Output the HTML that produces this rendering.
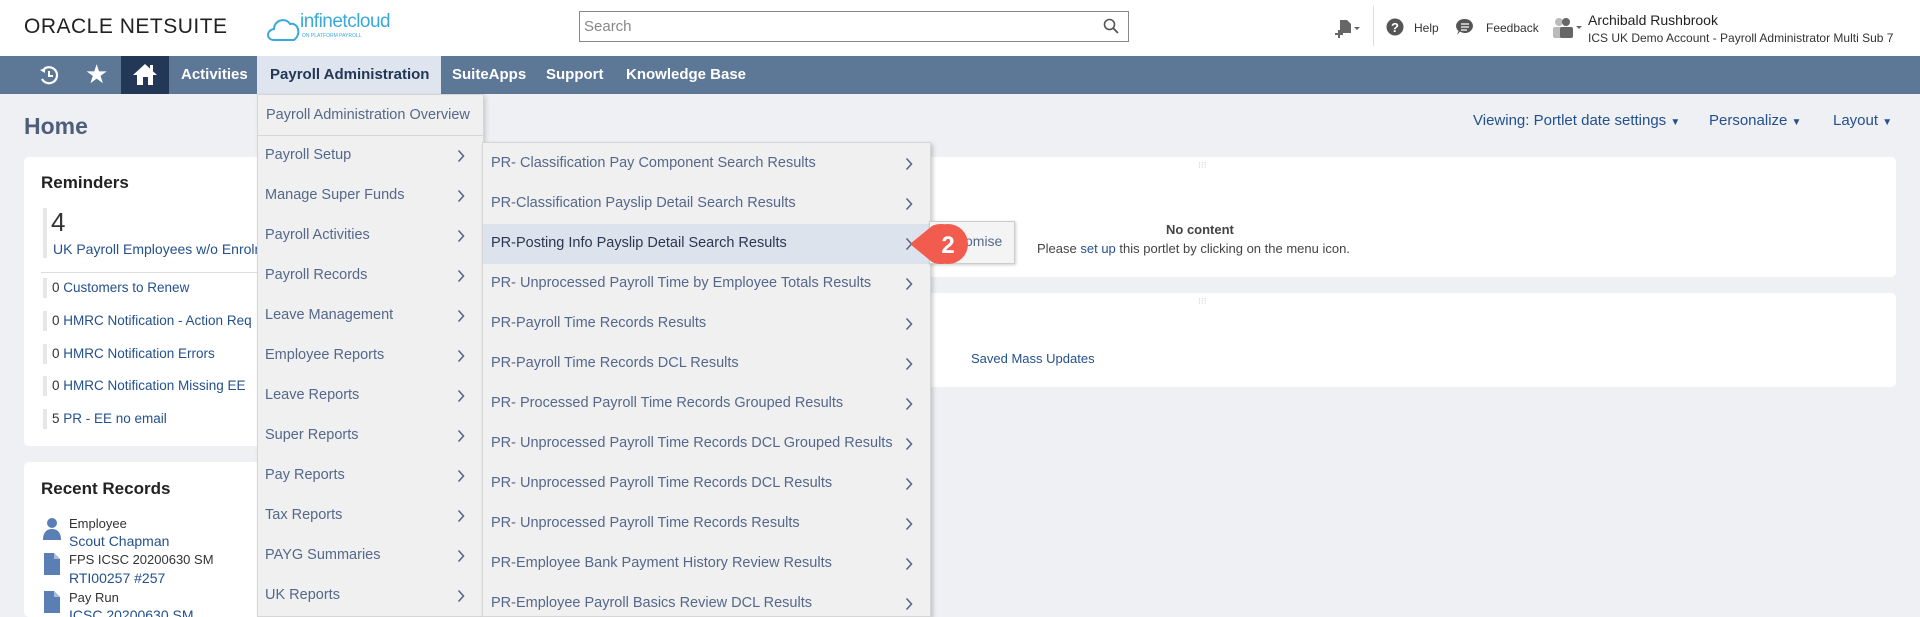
<!DOCTYPE html>
<html><head><meta charset="utf-8"><style>
*{margin:0;padding:0;box-sizing:border-box}
html{width:1920px;height:617px;overflow:hidden}
body{width:1920px;height:617px;overflow:hidden;background:#eef0f4;font-family:"Liberation Sans",sans-serif;position:relative}
.a{position:absolute;white-space:nowrap}
.hdr{left:0;top:0;width:1920px;height:56px;background:#fff}
.nav{left:0;top:56px;width:1920px;height:38px;background:#5d7797}
.nv{top:56px;height:38px;line-height:38px;color:#fff;font-weight:bold;font-size:15px}
.card{background:#fff;border-radius:5px}
.m1{left:257px;top:94px;width:227px;height:523px;background:#f0f0f0;border:1px solid #d6d6d6;box-shadow:2px 2px 4px rgba(0,0,0,.15)}
.m2{left:482px;top:142px;width:449px;height:475px;background:#f0f0f0;border:1px solid #d6d6d6;box-shadow:2px 2px 4px rgba(0,0,0,.2)}
.it{position:absolute;left:8px;font-size:14.5px;color:#55688a}
.ar{position:absolute;width:8px;height:14px}
.lk{color:#24508c}
.rem{font-size:13.5px;color:#333}
.bar{position:absolute;left:43px;width:4px;background:#e6e6e6}
</style></head><body>
<svg width="0" height="0" style="position:absolute"><defs><symbol id="ch" viewBox="0 0 8 14"><path d="M1.5 1.5 L6.5 7 L1.5 12.5" fill="none" stroke="#55688a" stroke-width="1.6"/></symbol></defs></svg>
<div class="a hdr"></div>
<div class="a" style="left:24px;top:15px;font-size:21px;color:#222;letter-spacing:.5px">ORACLE NETSUITE</div>
<svg class="a" style="left:266px;top:14px" width="36" height="30"><path d="M8 26 C0 26 0 16 8 15 C8 6 20 3 24 10 C32 8 36 20 28 26 Z" fill="none" stroke="#3aa9d9" stroke-width="2"/></svg>
<div class="a" style="left:300px;top:11px;font-size:19px;color:#3aa9d9;letter-spacing:-.5px">infinetcloud</div>
<div class="a" style="left:302px;top:33px;font-size:5px;color:#3aa9d9">ON PLATFORM PAYROLL</div>
<div class="a" style="left:579px;top:11px;width:550px;height:31px;border:1px solid #888;background:#fff;font-size:15px;color:#888;padding:6px 4px">Search</div>
<svg class="a" style="left:1103px;top:18px" width="16" height="16"><circle cx="6.5" cy="6.5" r="5" stroke="#555" stroke-width="1.6" fill="none"/><path d="M10 10 L15 15" stroke="#555" stroke-width="1.8"/></svg>
<svg class="a" style="left:1334px;top:18px" width="28" height="22"><path d="M6 2h7l4 4v9H6z" fill="#666"/><path d="M1 16h8M5 12v8" stroke="#666" stroke-width="2"/><path d="M20 9h6l-3 3z" fill="#666"/></svg>
<div class="a" style="left:1373px;top:6px;width:1px;height:40px;background:#ddd"></div>
<svg class="a" style="left:1386px;top:18px" width="18" height="18"><circle cx="9" cy="9" r="8.5" fill="#555"/><text x="9" y="14" font-size="13" font-weight="bold" fill="#fff" text-anchor="middle" font-family="Liberation Sans">?</text></svg>
<div class="a" style="left:1414px;top:21px;font-size:12px;color:#333">Help</div>
<svg class="a" style="left:1456px;top:18px" width="18" height="18"><path d="M9 1a8 7 0 1 1-5 12.5L1 17l1.5-4A8 7 0 0 1 9 1z" fill="#555"/><path d="M5 6h8M5 9h8M5 12h6" stroke="#fff" stroke-width="1.3"/></svg>
<div class="a" style="left:1486px;top:21px;font-size:12px;color:#333">Feedback</div>
<svg class="a" style="left:1551px;top:17px" width="34" height="22"><circle cx="8" cy="5" r="4" fill="#bbb"/><rect x="2" y="10" width="12" height="11" rx="2" fill="#bbb"/><circle cx="15" cy="5" r="4" fill="#666"/><rect x="9" y="10" width="13" height="11" rx="2" fill="#666"/><path d="M25 9h6l-3 3z" fill="#666"/></svg>
<div class="a" style="left:1588px;top:12px;font-size:14px;color:#222">Archibald Rushbrook</div>
<div class="a" style="left:1588px;top:31px;font-size:12px;color:#333">ICS UK Demo Account - Payroll Administrator Multi Sub 7</div>

<div class="a nav"></div>
<svg class="a" style="left:38px;top:64px" width="22" height="22"><path d="M6 5 A8 8 0 1 1 4 15" fill="none" stroke="#fff" stroke-width="2.2"/><path d="M2 6l5-2 0 5z" fill="#fff"/><path d="M11 7v5h4" stroke="#fff" stroke-width="2" fill="none"/></svg>
<div class="a" style="left:85px;top:59px;font-size:26px;color:#fff">★</div>
<div class="a" style="left:121px;top:56px;width:48px;height:38px;background:#233756"></div>
<svg class="a" style="left:132px;top:62px" width="26" height="24"><path d="M13 2L1 13h4v10h16V13h4z" fill="#fff"/><rect x="11" y="15" width="5" height="8" fill="#233756"/><rect x="18" y="3" width="3" height="6" fill="#fff"/></svg>
<div class="a nv" style="left:181px">Activities</div>
<div class="a" style="left:257px;top:56px;width:184px;height:38px;background:#dfe5ee"></div>
<div class="a nv" style="left:270px;color:#233756">Payroll Administration</div>
<div class="a nv" style="left:452px">SuiteApps</div>
<div class="a nv" style="left:546px">Support</div>
<div class="a nv" style="left:626px">Knowledge Base</div>

<div class="a" style="left:24px;top:113px;font-size:23px;font-weight:bold;color:#4d5f7a">Home</div>
<div class="a" style="left:1473px;top:112px;font-size:15px;color:#24508c">Viewing: Portlet date settings <span style="font-size:10px">▼</span></div>
<div class="a" style="left:1709px;top:112px;font-size:15px;color:#24508c">Personalize <span style="font-size:10px">▼</span></div>
<div class="a" style="left:1833px;top:112px;font-size:15px;color:#24508c">Layout <span style="font-size:10px">▼</span></div>

<div class="a card" style="left:24px;top:157px;width:260px;height:289px"></div>
<div class="a" style="left:41px;top:173px;font-size:17px;font-weight:bold;color:#222">Reminders</div>
<div class="bar" style="top:208px;height:50px"></div>
<div class="a" style="left:51px;top:207px;font-size:26px;color:#333">4</div>
<div class="a lk" style="left:53px;top:241px;font-size:14px">UK Payroll Employees w/o Enrolm</div>
<div class="a" style="left:41px;top:272px;width:220px;height:1px;background:#ddd"></div>
<div class="bar" style="top:278px;height:20px"></div><div class="a rem" style="left:52px;top:280px">0 <span class="lk">Customers to Renew</span></div>
<div class="bar" style="top:311px;height:20px"></div><div class="a rem" style="left:52px;top:313px">0 <span class="lk">HMRC Notification - Action Req</span></div>
<div class="bar" style="top:344px;height:20px"></div><div class="a rem" style="left:52px;top:346px">0 <span class="lk">HMRC Notification Errors</span></div>
<div class="bar" style="top:376px;height:20px"></div><div class="a rem" style="left:52px;top:378px">0 <span class="lk">HMRC Notification Missing EE</span></div>
<div class="bar" style="top:409px;height:20px"></div><div class="a rem" style="left:52px;top:411px">5 <span class="lk">PR - EE no email</span></div>

<div class="a card" style="left:24px;top:462px;width:260px;height:155px"></div>
<div class="a" style="left:41px;top:479px;font-size:17px;font-weight:bold;color:#222">Recent Records</div>
<svg class="a" style="left:42px;top:517px" width="20" height="24"><circle cx="10" cy="6" r="5" fill="#5a7fb5"/><path d="M1 23c0-8 4-11 9-11s9 3 9 11z" fill="#5a7fb5"/></svg>
<div class="a" style="left:69px;top:516px;font-size:13px;color:#333">Employee</div>
<div class="a lk" style="left:69px;top:533px;font-size:14px">Scout Chapman</div>
<svg class="a" style="left:44px;top:553px" width="16" height="22"><path d="M0 0h10l6 6v16H0z" fill="#5a7fb5"/><path d="M10 0v6h6" fill="#a8bddb"/></svg>
<div class="a" style="left:69px;top:552px;font-size:13px;color:#333">FPS ICSC 20200630 SM</div>
<div class="a lk" style="left:69px;top:570px;font-size:14px">RTI00257 #257</div>
<svg class="a" style="left:44px;top:591px" width="16" height="22"><path d="M0 0h10l6 6v16H0z" fill="#5a7fb5"/><path d="M10 0v6h6" fill="#a8bddb"/></svg>
<div class="a" style="left:69px;top:590px;font-size:13px;color:#333">Pay Run</div>
<div class="a lk" style="left:69px;top:607px;font-size:14px">ICSC 20200630 SM</div>

<div class="a card" style="left:920px;top:157px;width:976px;height:120px"></div>
<div class="a" style="left:1198px;top:160px;font-size:9px;color:#ccc">⁝⁝⁝</div>
<div class="a" style="left:1166px;top:222px;font-size:13px;font-weight:bold;color:#444">No content</div>
<div class="a" style="left:1037px;top:241px;font-size:13px;color:#444">Please <span class="lk">set up</span> this portlet by clicking on the menu icon.</div>
<div class="a card" style="left:920px;top:293px;width:976px;height:94px"></div>
<div class="a" style="left:1198px;top:296px;font-size:9px;color:#ccc">⁝⁝⁝</div>
<div class="a lk" style="left:971px;top:351px;font-size:13px">Saved Mass Updates</div>

<div class="a m1">
<div class="it" style="top:12px">Payroll Administration Overview</div>
<div style="position:absolute;left:0;top:40px;width:225px;height:1px;background:#d6d6d6"></div>
</div>
<div class="a" style="left:257px;top:135px;width:227px;height:482px">
<div class="it" style="top:12px">Payroll Setup</div><svg class="ar" style="left:200px;top:14px"><use href="#ch"/></svg>
<div class="it" style="top:52px">Manage Super Funds</div><svg class="ar" style="left:200px;top:54px"><use href="#ch"/></svg>
<div class="it" style="top:92px">Payroll Activities</div><svg class="ar" style="left:200px;top:94px"><use href="#ch"/></svg>
<div class="it" style="top:132px">Payroll Records</div><svg class="ar" style="left:200px;top:134px"><use href="#ch"/></svg>
<div class="it" style="top:172px">Leave Management</div><svg class="ar" style="left:200px;top:174px"><use href="#ch"/></svg>
<div class="it" style="top:212px">Employee Reports</div><svg class="ar" style="left:200px;top:214px"><use href="#ch"/></svg>
<div class="it" style="top:252px">Leave Reports</div><svg class="ar" style="left:200px;top:254px"><use href="#ch"/></svg>
<div class="it" style="top:292px">Super Reports</div><svg class="ar" style="left:200px;top:294px"><use href="#ch"/></svg>
<div class="it" style="top:332px">Pay Reports</div><svg class="ar" style="left:200px;top:334px"><use href="#ch"/></svg>
<div class="it" style="top:372px">Tax Reports</div><svg class="ar" style="left:200px;top:374px"><use href="#ch"/></svg>
<div class="it" style="top:412px">PAYG Summaries</div><svg class="ar" style="left:200px;top:414px"><use href="#ch"/></svg>
<div class="it" style="top:452px">UK Reports</div><svg class="ar" style="left:200px;top:454px"><use href="#ch"/></svg>
</div>
<div class="a m2">
<div style="position:absolute;left:0;top:81px;width:447px;height:40px;background:#dde3ec"></div>
<div class="it" style="top:12px">PR- Classification Pay Component Search Results</div><svg class="ar" style="left:422px;top:14px"><use href="#ch"/></svg>
<div class="it" style="top:52px">PR-Classification Payslip Detail Search Results</div><svg class="ar" style="left:422px;top:54px"><use href="#ch"/></svg>
<div class="it" style="top:92px;color:#2b3650">PR-Posting Info Payslip Detail Search Results</div><svg class="ar" style="left:422px;top:94px"><use href="#ch"/></svg>
<div class="it" style="top:132px">PR- Unprocessed Payroll Time by Employee Totals Results</div><svg class="ar" style="left:422px;top:134px"><use href="#ch"/></svg>
<div class="it" style="top:172px">PR-Payroll Time Records Results</div><svg class="ar" style="left:422px;top:174px"><use href="#ch"/></svg>
<div class="it" style="top:212px">PR-Payroll Time Records DCL Results</div><svg class="ar" style="left:422px;top:214px"><use href="#ch"/></svg>
<div class="it" style="top:252px">PR- Processed Payroll Time Records Grouped Results</div><svg class="ar" style="left:422px;top:254px"><use href="#ch"/></svg>
<div class="it" style="top:292px">PR- Unprocessed Payroll Time Records DCL Grouped Results</div><svg class="ar" style="left:422px;top:294px"><use href="#ch"/></svg>
<div class="it" style="top:332px">PR- Unprocessed Payroll Time Records DCL Results</div><svg class="ar" style="left:422px;top:334px"><use href="#ch"/></svg>
<div class="it" style="top:372px">PR- Unprocessed Payroll Time Records Results</div><svg class="ar" style="left:422px;top:374px"><use href="#ch"/></svg>
<div class="it" style="top:412px">PR-Employee Bank Payment History Review Results</div><svg class="ar" style="left:422px;top:414px"><use href="#ch"/></svg>
<div class="it" style="top:452px">PR-Employee Payroll Basics Review DCL Results</div><svg class="ar" style="left:422px;top:454px"><use href="#ch"/></svg>
</div>

<div class="a" style="left:929px;top:221px;width:86px;height:43px;background:#f4f4f4;border:1px solid #ccc;box-shadow:1px 1px 3px rgba(0,0,0,.2)"></div>
<div class="a" style="left:965px;top:233px;font-size:14px;color:#55688a">omise</div>
<svg class="a" style="left:906px;top:222px" width="64" height="44"><path d="M4 22 L26 4 A20 20 0 1 1 26 40 Z" fill="#f25c4f"/><circle cx="42" cy="22" r="20" fill="#f25c4f"/><text x="42" y="31" font-size="24" font-weight="bold" fill="#fff" text-anchor="middle" font-family="Liberation Sans">2</text></svg>
</body></html>
